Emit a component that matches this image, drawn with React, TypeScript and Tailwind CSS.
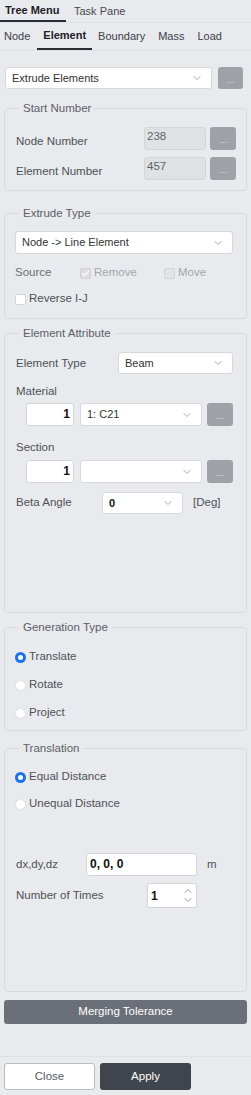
import { ChevronDown, ChevronUp, Check } from "lucide-react";
import type { ReactNode } from "react";

function Select({ value, className = "", bold = false }: { value: string; className?: string; bold?: boolean }) {
  return (
    <div className={`flex items-center justify-between bg-white border border-[#d6d8dc] rounded-[3px] pl-[6px] pr-[8px] ${className}`}>
      <span className={`text-[11px] ${bold ? "font-bold text-[#111]" : "text-[#333]"}`}>{value}</span>
      <ChevronDown className="w-[12px] h-[12px] text-[#8a8d92]" strokeWidth={1.5} />
    </div>
  );
}

function DotsButton({ className = "" }: { className?: string }) {
  return (
    <div className={`flex items-center justify-center bg-[#9ea1a7] rounded-[3px] text-[#e4e5e8] text-[9px] leading-none pt-[4px] ${className}`}>
      ...
    </div>
  );
}

function Group({ title, children, className = "" }: { title: string; children: ReactNode; className?: string }) {
  return (
    <fieldset className={`mx-[4px] border border-[#d9dadf] rounded-[4px] px-[10px] ${className}`}>
      <legend className="ml-[4px] px-[4px] text-[11.5px] leading-[16px] text-[#5b5f66]">{title}</legend>
      {children}
    </fieldset>
  );
}

function Radio({ label, checked = false }: { label: string; checked?: boolean }) {
  return (
    <div className="flex items-center gap-[3px] h-[16px]">
      {checked ? (
        <span className="w-[11px] h-[11px] rounded-full bg-[#1a73e8] flex items-center justify-center">
          <span className="w-[5px] h-[5px] rounded-full bg-white" />
        </span>
      ) : (
        <span className="w-[11px] h-[11px] rounded-full bg-white border border-[#dddfe3]" />
      )}
      <span className="text-[11.5px] text-[#4d5157]">{label}</span>
    </div>
  );
}

export default function App() {
  return (
    <div className="w-[251px] h-[1095px] bg-[#e9eaee] font-['Liberation_Sans',Arial,sans-serif] flex flex-col overflow-hidden">
      {/* top tabs */}
      <div className="flex items-end h-[23px] border-b border-[#e1e2e6]">
        <div className="h-full pl-[5px] flex items-center text-[11px] font-bold text-[#1d2025] border-b-2 border-[#2a2d31] w-[66px] whitespace-nowrap">Tree Menu</div>
        <div className="h-full px-[8px] flex items-center text-[11px] text-[#464a50] whitespace-nowrap">Task Pane</div>
      </div>
      <div className="flex items-end h-[28px] border-b border-[#e1e2e6]">
        <div className="h-full pl-[4px] pr-[8px] flex items-center text-[11px] text-[#3d4147]">Node</div>
        <div className="h-full px-[6px] flex items-center text-[11px] font-bold text-[#1d2025] border-b-2 border-[#2a2d31] ml-[-1px]">Element</div>
        <div className="h-full px-[6px] flex items-center text-[11px] text-[#3d4147]">Boundary</div>
        <div className="h-full px-[7px] flex items-center text-[11px] text-[#3d4147]">Mass</div>
        <div className="h-full px-[6px] flex items-center text-[11px] text-[#3d4147]">Load</div>
      </div>

      {/* command select */}
      <div className="flex items-center gap-[6px] mt-[16px] px-[5px]">
        <Select value="Extrude Elements" className="w-[207px] h-[22px]" />
        <DotsButton className="w-[25px] h-[22px]" />
      </div>

      {/* Start Number */}
      <Group title="Start Number" className="mt-[11px] pb-[10px]">
        <div className="flex items-center mt-[11px] h-[23px]">
          <span className="text-[11.5px] text-[#4d5157] flex-1 pl-[1px] pt-[7px]">Node Number</span>
          <div className="w-[62px] h-[23px] bg-[#e0e1e5] border border-[#d3d5d9] rounded-[3px] text-[11.5px] text-[#5f636a] px-[2px] leading-[16px]">238</div>
          <DotsButton className="w-[26px] h-[23px] ml-[4px]" />
        </div>
        <div className="flex items-center mt-[7px] h-[23px]">
          <span className="text-[11.5px] text-[#4d5157] flex-1 pl-[1px] pt-[7px]">Element Number</span>
          <div className="w-[62px] h-[23px] bg-[#e0e1e5] border border-[#d3d5d9] rounded-[3px] text-[11.5px] text-[#5f636a] px-[2px] leading-[16px]">457</div>
          <DotsButton className="w-[26px] h-[23px] ml-[4px]" />
        </div>
      </Group>

      {/* Extrude Type */}
      <Group title="Extrude Type" className="mt-[14px] pb-[10px]">
        <Select value="Node -> Line Element" className="w-[218px] h-[23px] mt-[10px]" />
        <div className="flex items-center mt-[10px] h-[18px]">
          <span className="text-[11.5px] text-[#6a6e74] w-[65px]">Source</span>
          <div className="flex items-center gap-[3px] w-[84px]">
            <span className="w-[11px] h-[11px] rounded-[2px] bg-[#dcdde1] border border-[#d0d2d6] flex items-center justify-center">
              <Check className="w-[9px] h-[9px] text-white" strokeWidth={3} />
            </span>
            <span className="text-[11.5px] text-[#a3a6ab]">Remove</span>
          </div>
          <div className="flex items-center gap-[3px]">
            <span className="w-[11px] h-[11px] rounded-[2px] bg-[#e2e3e7] border border-[#d0d2d6]" />
            <span className="text-[11.5px] text-[#a3a6ab]">Move</span>
          </div>
        </div>
        <div className="flex items-center gap-[3px] mt-[8px] h-[18px]">
          <span className="w-[11px] h-[11px] rounded-[2px] bg-white border border-[#d3d5d9]" />
          <span className="text-[11.5px] text-[#4d5157]">Reverse I-J</span>
        </div>
      </Group>

      {/* Element Attribute */}
      <Group title="Element Attribute" className="mt-[6px] h-[288px]">
        <div className="flex items-center mt-[11px] h-[22px]">
          <span className="text-[11.5px] text-[#4d5157] w-[103px] pl-[1px] pt-[2px]">Element Type</span>
          <Select value="Beam" className="w-[115px] h-[22px]" />
        </div>
        <div className="text-[11.5px] text-[#4d5157] mt-[8px] pl-[1px] h-[18px] leading-[18px]">Material</div>
        <div className="flex items-center mt-[3px] ml-[11px] h-[23px]">
          <div className="w-[48px] h-[23px] bg-white border border-[#d3d5d9] rounded-[3px] text-[12px] font-bold text-[#111] text-right pr-[3px] leading-[20px]">1</div>
          <Select value="1: C21" className="w-[122px] h-[23px] ml-[6px]" />
          <DotsButton className="w-[26px] h-[23px] ml-[5px]" />
        </div>
        <div className="text-[11.5px] text-[#4d5157] mt-[12px] pl-[1px] h-[18px] leading-[18px]">Section</div>
        <div className="flex items-center mt-[4px] ml-[11px] h-[23px]">
          <div className="w-[48px] h-[23px] bg-white border border-[#d3d5d9] rounded-[3px] text-[12px] font-bold text-[#111] text-right pr-[3px] leading-[20px]">1</div>
          <Select value="" className="w-[122px] h-[23px] ml-[6px]" />
          <DotsButton className="w-[26px] h-[23px] ml-[5px]" />
        </div>
        <div className="flex items-center mt-[9px] h-[22px]">
          <span className="text-[11.5px] text-[#4d5157] w-[87px] pl-[1px]">Beta Angle</span>
          <Select value="0" bold className="w-[81px] h-[22px]" />
          <span className="text-[11.5px] text-[#4d5157] ml-[10px]">[Deg]</span>
        </div>
      </Group>

      {/* Generation Type */}
      <Group title="Generation Type" className="mt-[6px] h-[112px]">
        <div className="flex flex-col gap-[12px] mt-[14px]">
          <Radio label="Translate" checked />
          <Radio label="Rotate" />
          <Radio label="Project" />
        </div>
      </Group>

      {/* Translation */}
      <Group title="Translation" className="mt-[9px] h-[252px]">
        <div className="flex flex-col gap-[11px] mt-[13px]">
          <Radio label="Equal Distance" checked />
          <Radio label="Unequal Distance" />
        </div>
        <div className="flex items-center mt-[41px] h-[23px]">
          <span className="text-[11.5px] text-[#4d5157] w-[71px] pl-[1px]">dx,dy,dz</span>
          <div className="w-[111px] h-[23px] bg-white border border-[#d3d5d9] rounded-[3px] text-[12px] font-bold text-[#111] pl-[3px] leading-[20px]">0, 0, 0</div>
          <span className="text-[11.5px] text-[#4d5157] ml-[10px]">m</span>
        </div>
        <div className="flex items-center mt-[7px] h-[25px]">
          <span className="text-[11.5px] text-[#4d5157] w-[132px] pl-[1px]">Number of Times</span>
          <div className="w-[50px] h-[25px] bg-white border border-[#d3d5d9] rounded-[3px] flex items-center justify-between pl-[3px] pr-[2px]">
            <span className="text-[12px] font-bold text-[#111]">1</span>
            <div className="flex flex-col items-center -space-y-[3px]">
              <ChevronUp className="w-[12px] h-[12px] text-[#777a80]" strokeWidth={1.5} />
              <ChevronDown className="w-[12px] h-[12px] text-[#777a80]" strokeWidth={1.5} />
            </div>
          </div>
        </div>
      </Group>

      {/* Merging Tolerance */}
      <div className="mx-[4px] mt-[8px] h-[24px] rounded-[3px] bg-[#6b7078] flex items-center justify-center text-[11.5px] text-white">
        Merging Tolerance
      </div>

      {/* footer */}
      <div className="mt-[32px] border-t border-[#dfe0e4] flex items-center gap-[5px] px-[4px] pt-[6px]">
        <div className="w-[91px] h-[27px] bg-white border border-[#b9bcc1] rounded-[3px] flex items-center justify-center text-[11.5px] text-[#555a60]">Close</div>
        <div className="w-[91px] h-[27px] bg-[#40454d] rounded-[3px] flex items-center justify-center text-[11.5px] text-white">Apply</div>
      </div>
    </div>
  );
}
